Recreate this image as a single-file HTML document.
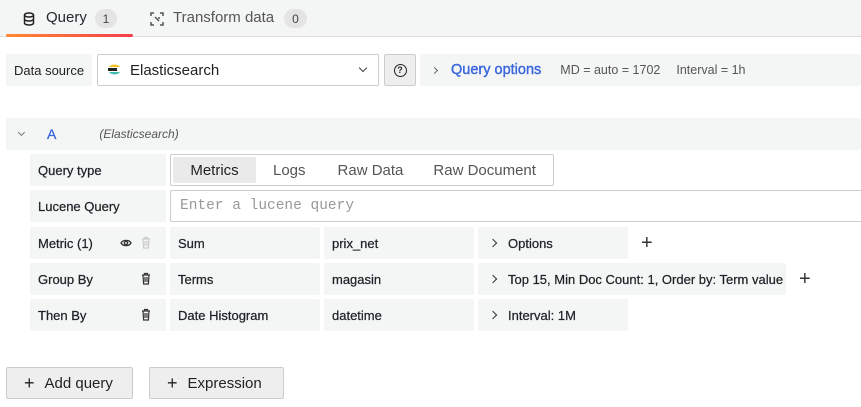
<!DOCTYPE html>
<html><head><style>
*{box-sizing:border-box;margin:0;padding:0}
body{width:861px;height:407px;overflow:hidden;background:#fff;font-family:"Liberation Sans",sans-serif;color:#24292e;position:relative}
.a{position:absolute}
.g{background:#f4f5f5;border-radius:2px}
.t{font-size:13px;color:#1f2328;display:flex;align-items:center;white-space:nowrap;-webkit-text-stroke:0.25px #1f2328}
.badge{background:#e4e4e4;border-radius:10px;font-size:12px;color:#444;display:flex;align-items:center;justify-content:center}
.chev{display:inline-block;width:6px;height:6px;border-right:1.5px solid #333;border-top:1.5px solid #333;transform:rotate(45deg);margin-right:12px}
</style></head><body>
<div class="a" style="left:0;top:0;width:861px;height:37px;background:#f4f5f5;border-bottom:1px solid #ddd"></div>
<svg class="a" style="left:23px;top:12px" width="12" height="14" viewBox="0 0 12 14"><ellipse cx="6" cy="3" rx="4.5" ry="2" fill="none" stroke="#222" stroke-width="1.5"/><path d="M1.5 3v8c0 1.2 2 2 4.5 2s4.5-.8 4.5-2V3M1.5 7c0 1.2 2 2 4.5 2s4.5-.8 4.5-2" fill="none" stroke="#222" stroke-width="1.5"/></svg>
<div class="a" style="left:46px;top:9px;font-size:15px;color:#24292e">Query</div>
<div class="a badge" style="left:95px;top:9px;width:22px;height:19px">1</div>
<div class="a" style="left:6px;top:34px;width:127px;height:3px;border-radius:2px;background:linear-gradient(90deg,#ff8833,#f53e4c)"></div>
<svg class="a" style="left:150px;top:12px" width="14" height="14" viewBox="0 0 14 14" fill="none" stroke="#555" stroke-width="1.5"><path d="M1 4V1h3M10 1h3v3M13 10v3h-3M4 13H1v-3M5 5l4 4M9 5v2"/></svg>
<div class="a" style="left:173px;top:9px;font-size:15px;color:#555">Transform data</div>
<div class="a badge" style="left:284px;top:9px;width:23px;height:19px">0</div>

<div class="a g" style="left:6px;top:54px;width:86px;height:32px;padding-left:8px;font-size:13px;color:#222;display:flex;align-items:center">Data source</div>
<div class="a" style="left:97px;top:54px;width:282px;height:32px;border:1px solid #ccc;border-radius:2px;display:flex;align-items:center">
<svg style="margin-left:9px" width="14" height="14" viewBox="0 0 14 14"><path d="M2 4a6 4 0 0 1 11 0z" fill="#f0bf1a"/><rect x="1" y="5" width="9" height="3" fill="#222"/><path d="M2 9h11a6 4 0 0 1-11 0z" fill="#3ebeb0"/></svg>
<span style="margin-left:9px;font-size:15px;color:#222">Elasticsearch</span>
<span style="position:absolute;right:12px;top:10px;width:6px;height:6px;border-right:1.5px solid #444;border-bottom:1.5px solid #444;transform:rotate(45deg)"></span></div>
<div class="a" style="left:384px;top:54px;width:32px;height:32px;background:#eee;border:1px solid #ccc;border-radius:2px;display:flex;align-items:center;justify-content:center"><div style="width:13px;height:13px;border:1.5px solid #222;border-radius:50%;font-size:9px;font-weight:bold;display:flex;align-items:center;justify-content:center">?</div></div>
<div class="a g" style="left:420px;top:54px;width:441px;height:32px;display:flex;align-items:center">
<span style="margin-left:12px;display:inline-block;width:5px;height:5px;border-right:1px solid #666;border-top:1px solid #666;transform:rotate(45deg)"></span>
<span style="margin-left:14px;color:#3866dd;font-size:14.5px;-webkit-text-stroke:0.4px #3866dd">Query options</span>
<span style="margin-left:19px;font-size:12.5px;color:#555">MD = auto = 1702</span>
<span style="margin-left:16px;font-size:12.5px;color:#555">Interval = 1h</span></div>

<div class="a g" style="left:6px;top:118px;width:855px;height:32px;display:flex;align-items:center">
<span style="margin-left:13px;margin-top:-4px;display:inline-block;width:5px;height:5px;border-right:1px solid #777;border-bottom:1px solid #777;transform:rotate(45deg)"></span>
<span style="margin-left:23px;color:#3866dd;font-size:14px;-webkit-text-stroke:0.3px #3866dd">A</span>
<span style="margin-left:43px;color:#555;font-size:12px;font-style:italic">(Elasticsearch)</span></div>

<div class="a g t" style="left:30px;top:154px;width:136px;height:32px;padding-left:8px">Query type</div>
<div class="a" style="left:170px;top:154px;width:384px;height:32px;border:1px solid #ccc;border-radius:2px;display:flex;align-items:center;font-size:15px;color:#555">
<span style="margin-left:2px;background:#eaeaea;height:26px;width:83px;display:flex;align-items:center;justify-content:center;color:#222;border-radius:2px">Metrics</span>
<span style="margin-left:17px">Logs</span><span style="margin-left:32px">Raw Data</span><span style="margin-left:30px">Raw Document</span></div>

<div class="a g t" style="left:30px;top:190px;width:136px;height:32px;padding-left:8px">Lucene Query</div>
<div class="a" style="left:170px;top:190px;width:700px;height:32px;border:1px solid #ccc;border-radius:2px;display:flex;align-items:center;padding-left:9px;font-family:'Liberation Mono',monospace;font-size:14.5px;color:#999">Enter a lucene query</div>

<div class="a g t" style="left:30px;top:227px;width:136px;height:32px;padding-left:8px">Metric (1)
<svg style="position:absolute;left:90px;top:10px" width="12" height="12" viewBox="0 0 12 12" fill="none" stroke="#333" stroke-width="1.3"><path d="M1 6c2-3.5 8-3.5 10 0-2 3.5-8 3.5-10 0z"/><circle cx="6" cy="6" r="1.6"/></svg>
<svg style="position:absolute;left:111px;top:9px" width="10" height="13" viewBox="0 0 10 13" fill="none" stroke="#ccc" stroke-width="1.2"><path d="M1 3h8M3.5 3V1.5h3V3M2 3l.6 9h4.8L8 3M4 5v5M6 5v5"/></svg></div>
<div class="a g t" style="left:30px;top:263px;width:136px;height:32px;padding-left:8px">Group By
<svg style="position:absolute;left:111px;top:9px" width="10" height="13" viewBox="0 0 10 13" fill="none" stroke="#333" stroke-width="1.2"><path d="M1 3h8M3.5 3V1.5h3V3M2 3l.6 9h4.8L8 3M4 5v5M6 5v5"/></svg></div>
<div class="a g t" style="left:30px;top:299px;width:136px;height:32px;padding-left:8px">Then By
<svg style="position:absolute;left:111px;top:9px" width="10" height="13" viewBox="0 0 10 13" fill="none" stroke="#333" stroke-width="1.2"><path d="M1 3h8M3.5 3V1.5h3V3M2 3l.6 9h4.8L8 3M4 5v5M6 5v5"/></svg></div>

<div class="a g t" style="left:170px;top:227px;width:150px;height:32px;padding-left:8px">Sum</div>
<div class="a g t" style="left:324px;top:227px;width:150px;height:32px;padding-left:8px">prix_net</div>
<div class="a g t" style="left:478px;top:227px;width:150px;height:32px;padding-left:12px"><span class="chev"></span>Options</div>
<div class="a" style="left:641px;top:232px;font-size:20px;color:#333">+</div>

<div class="a g t" style="left:170px;top:263px;width:150px;height:32px;padding-left:8px">Terms</div>
<div class="a g t" style="left:324px;top:263px;width:150px;height:32px;padding-left:8px">magasin</div>
<div class="a g t" style="left:478px;top:263px;width:308px;height:32px;padding-left:12px"><span class="chev"></span>Top 15, Min Doc Count: 1, Order by: Term value</div>
<div class="a" style="left:799px;top:268px;font-size:20px;color:#333">+</div>

<div class="a g t" style="left:170px;top:299px;width:150px;height:32px;padding-left:8px">Date Histogram</div>
<div class="a g t" style="left:324px;top:299px;width:150px;height:32px;padding-left:8px">datetime</div>
<div class="a g t" style="left:478px;top:299px;width:150px;height:32px;padding-left:12px"><span class="chev"></span>Interval: 1M</div>

<div class="a" style="left:6px;top:367px;width:127px;height:32px;background:#eee;border:1px solid #ccc;border-radius:2px;display:flex;align-items:center;font-size:15px;color:#222"><span style="margin-left:17px;font-size:18px">+</span><span style="margin-left:10px">Add query</span></div>
<div class="a" style="left:149px;top:367px;width:135px;height:32px;background:#eee;border:1px solid #ccc;border-radius:2px;display:flex;align-items:center;font-size:15px;color:#222"><span style="margin-left:17px;font-size:18px">+</span><span style="margin-left:10px">Expression</span></div>
</body></html>
